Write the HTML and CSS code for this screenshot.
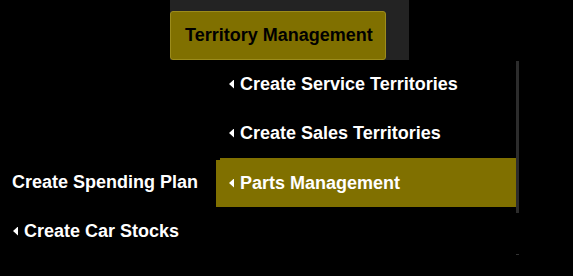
FILE: index.html
```html
<!DOCTYPE html>
<html>
<head>
<meta charset="utf-8">
<link rel="stylesheet" href="styles.css">
</head>
<body>
<div class="topbar">
  <div class="tab-button">Territory Management</div>
</div>
<div class="menus">
  <div class="col-left">
    <div class="item plain">Create Spending Plan</div>
    <div class="item"><span class="caret"></span>Create Car Stocks</div>
  </div>
  <div class="col-right">
    <div class="item"><span class="caret"></span>Create Service Territories</div>
    <div class="item"><span class="caret"></span>Create Sales Territories</div>
    <div class="item active"><span class="caret"></span>Parts Management</div>
  </div>
  <div class="scroll-track">
    <div class="scroll-thumb"></div>
    <div class="scroll-tick"></div>
  </div>
</div>
</body>
</html>
```
FILE: styles.css
```css
html, body {
  margin: 0;
  padding: 0;
  background: #000;
  width: 573px;
  height: 276px;
  overflow: hidden;
  font-family: "Liberation Sans", Arial, sans-serif;
  font-weight: bold;
  font-size: 18px;
}

.topbar {
  margin-left: 170px;
  width: 239px;
  height: 60px;
  background: #232323;
  display: flex;
  align-items: flex-end;
}

.tab-button {
  box-sizing: border-box;
  width: 216px;
  height: 49px;
  background: #807000;
  border: 1px solid #9c8c1c;
  border-radius: 3px;
  color: #000;
  line-height: 47px;
  padding-left: 14px;
  white-space: nowrap;
}

.menus {
  display: flex;
}

.col-left {
  width: 216px;
  padding-top: 98px;
}

.col-right {
  width: 300px;
}

.item {
  height: 49px;
  display: flex;
  align-items: center;
  padding-left: 13px;
  color: #fff;
  white-space: nowrap;
}

.item.plain {
  padding-left: 12px;
}

.caret {
  display: block;
  width: 5px;
  height: 9px;
  background: #fff;
  clip-path: polygon(100% 0, 100% 100%, 0 50%);
  margin-right: 6px;
  margin-top: -1px;
}

.item.active {
  background: #807000;
  position: relative;
  height: 47px;
  margin-top: 2px;
}

.item.active::before {
  content: "";
  position: absolute;
  left: 4px;
  right: 0;
  top: -2px;
  height: 2px;
  background: #807000;
}

.scroll-track {
  width: 3px;
  display: flex;
  flex-direction: column;
}

.scroll-thumb {
  margin-top: 1px;
  height: 152px;
  background: #2c2c2c;
}

.scroll-tick {
  margin-top: 41px;
  height: 1px;
  background: #333;
}
```
